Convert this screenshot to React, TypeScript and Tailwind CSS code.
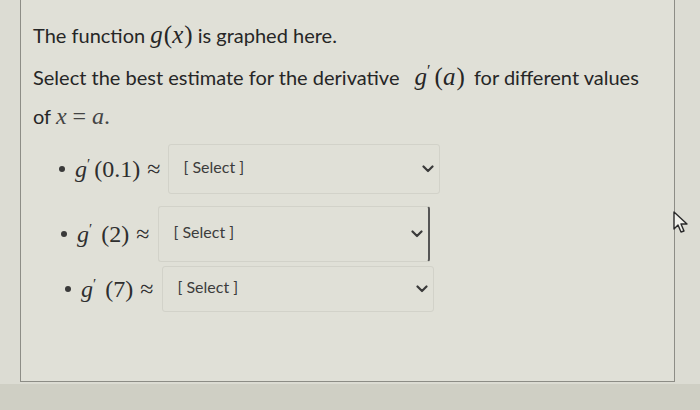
import React from "react";

const serif = { fontFamily: '"Liberation Serif", "DejaVu Serif", serif' };

function Chevron() {
  return (
    <svg width="12" height="8" viewBox="0 0 12 8" className="shrink-0">
      <path d="M1.5 1.5 L6 6 L10.5 1.5" fill="none" stroke="#3a3a3a" strokeWidth="2.2" strokeLinecap="round" strokeLinejoin="round" />
    </svg>
  );
}

function Row({ arg, gapLeft, mt, h, bl, sp, focus }: { arg: string; gapLeft: string; mt: string; h: string; bl: string; sp: string; focus?: boolean }) {
  return (
    <div className={`flex items-center ${mt}`}>
      <span className={`w-[6px] h-[6px] rounded-full bg-[#3a3a3a] ${bl} mr-[10px]`} />
      <span className="text-[24px] leading-none text-[#2e2e2e] whitespace-nowrap flex items-center" style={serif}>
        <i>g</i>
        <span className="text-[15px] -mt-[10px]">′</span>
        <span className={sp}>({arg})</span>
        <span className="ml-[7px] text-[24px]">≈</span>
      </span>
      <div
        className={`${gapLeft} ${h} w-[272px] border border-[#d2d2c9] rounded-[3px] flex items-center justify-between pl-[14px] pr-[5px] ${
          focus ? "border-r-[2px] border-r-[#555]" : ""
        }`}
      >
        <span className="text-[16px] text-[#3c3c3c] -mt-[4px]">[ Select ]</span>
        <Chevron />
      </div>
    </div>
  );
}

export default function App() {
  return (
    <div
      className="w-[700px] h-[410px] overflow-hidden bg-[#cfcfc4] relative"
      style={{ fontFamily: 'Lato, "Liberation Sans", sans-serif' }}
    >
      <div className="h-[384px] bg-[#dcdcd3]">
        <div className="ml-[20px] w-[655px] h-[382px] border border-t-0 border-[#8d8d86] bg-[#e0e0d7] pl-[12px]">
          <p className="pt-[21px] text-[20px] leading-[28px] text-[#262626]">
            The function{" "}
            <span style={serif} className="text-[25px] leading-none">
              <i>g</i>
              <span className="ml-[1px]">(</span>
              <i>x</i>
              <span className="ml-[1px]">)</span>
            </span>{" "}
            is graphed here.
          </p>
          <p className="mt-[9px] text-[20px] leading-[39px] text-[#262626]">
            Select the best estimate for the derivative{" "}
            <span style={serif} className="text-[25px] leading-none ml-[10px]">
              <i>g</i>
              <span className="text-[16px] align-[9px]">′</span>
              <span className="ml-[4px]">(</span>
              <i>a</i>
              <span className="ml-[1px]">)</span>
            </span>{" "}
            <span className="ml-[4px]">for different values</span>
            <br />
            of{" "}
            <span style={serif} className="text-[24px] leading-none text-[#444]">
              <i>x</i>
              <span className="mx-[6px]">=</span>
              <i>a</i>.
            </span>
          </p>
          <Row arg="0.1" bl="ml-[26px]" sp="ml-[4px]" gapLeft="ml-[8px]" mt="mt-[8px]" h="h-[50px]" />
          <Row arg="2" bl="ml-[28px]" sp="ml-[9px]" gapLeft="ml-[9px]" mt="mt-[12px]" h="h-[56px]" focus />
          <Row arg="7" bl="ml-[32px]" sp="ml-[9px]" gapLeft="ml-[9px]" mt="mt-[4px]" h="h-[46px]" />
        </div>
      </div>
      <svg className="absolute left-[672px] top-[210px]" width="18" height="24" viewBox="0 0 18 24">
        <path d="M2 2 L2 19 L6 15 L9 22 L12 21 L9 14 L15 14 Z" fill="#f2f2ec" stroke="#2a2a2a" strokeWidth="1.4" strokeLinejoin="round" />
      </svg>
    </div>
  );
}
